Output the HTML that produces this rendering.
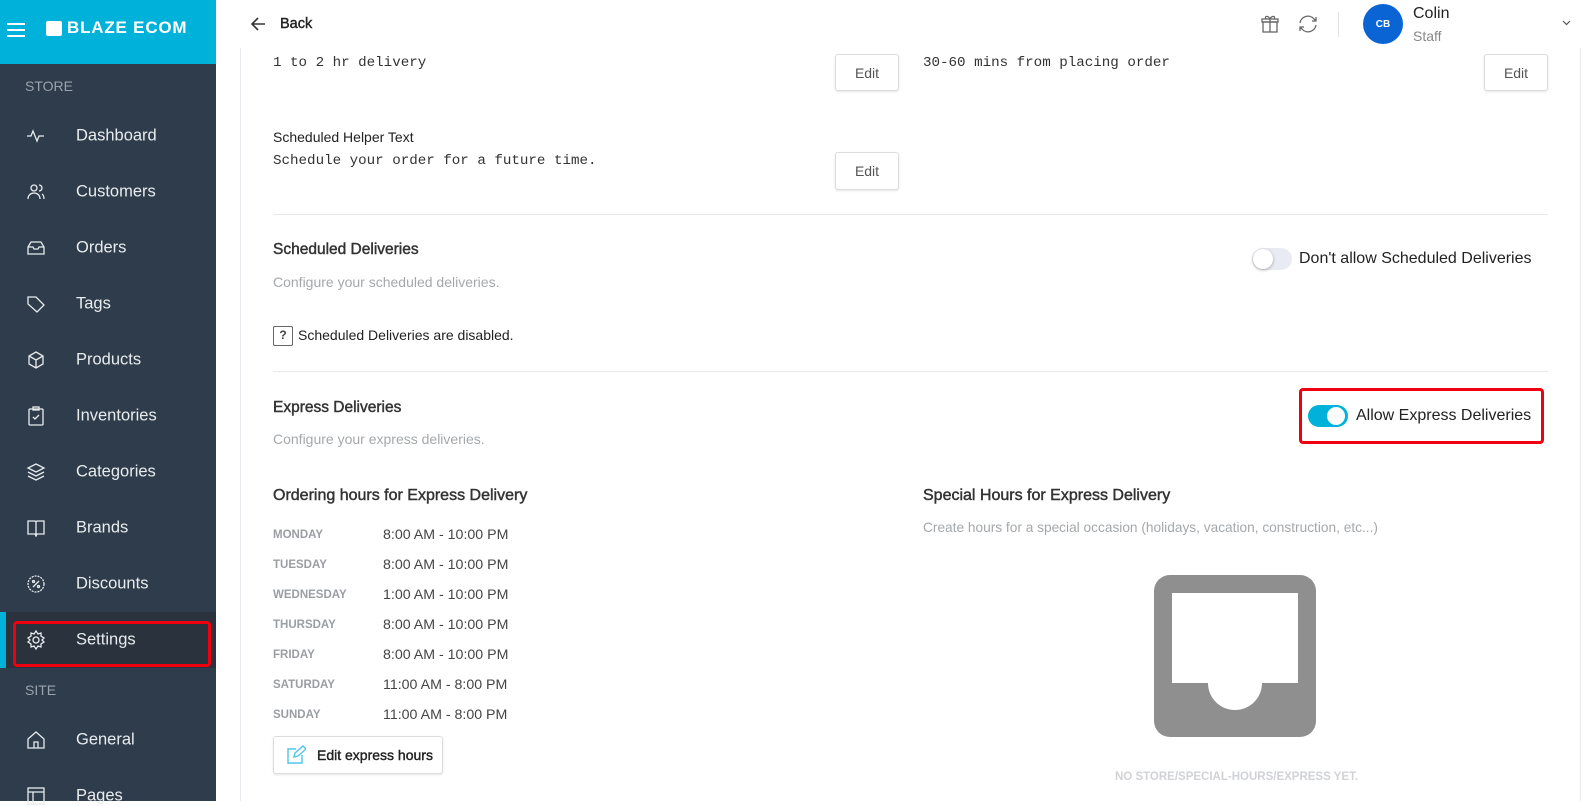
<!DOCTYPE html>
<html><head><meta charset="utf-8"><style>
*{margin:0;padding:0;box-sizing:border-box}
body{width:1591px;height:801px;overflow:hidden;background:#fff;font-family:"Liberation Sans",Arial,sans-serif;position:relative;color:#1f2a2a}
.a{position:absolute;white-space:nowrap}
#sb{position:absolute;left:0;top:0;width:216px;height:801px;background:#2f3c4b}
#top{position:absolute;left:0;top:0;width:216px;height:64px;background:#00b2d9}
.nav{position:absolute;left:76px;font-size:16.5px;color:#e8ecef;transform:translateY(-50%)}
.ic{position:absolute;left:26px;width:20px;height:20px;transform:translateY(-50%)}
.sec{position:absolute;left:25px;font-size:14px;color:#9aa3ad;transform:translateY(-50%)}
.mono{font-family:"Liberation Mono",monospace;font-size:14.2px;color:#333}
.btn{position:absolute;border:1px solid #dcdcdc;border-radius:3px;background:#fff;box-shadow:0 1px 2px rgba(0,0,0,.1);font-size:14px;color:#555;display:flex;align-items:center;justify-content:center;white-space:nowrap}
.h{font-size:15.5px;color:#333;font-weight:normal;-webkit-text-stroke:0.45px #333}
.g{font-size:14px;color:#a5a8ab}
.day{position:absolute;left:273px;font-size:11.5px;font-weight:bold;color:#9a9ea3;transform:translateY(-50%)}
.tm{position:absolute;left:383px;font-size:14.2px;color:#444;transform:translateY(-50%)}
.hr{position:absolute;left:273px;width:1275px;height:1px;background:#e6e8ec}
</style></head><body>
<div id="sb"></div>
<div id="top"></div>
<div class="a" style="left:7px;top:23px;width:18px;height:2px;background:#fff;box-shadow:0 6px 0 #fff,0 12px 0 #fff"></div>
<div class="a" style="left:46px;top:21px;width:16px;height:15px;background:#fff;border-radius:2px"></div>
<div class="a" style="left:67px;top:18px;font-size:17px;font-weight:bold;color:#fff;letter-spacing:.8px">BLAZE ECOM</div>
<div class="sec" style="top:86px">STORE</div>
<svg class="ic" style="top:136px" viewBox="0 0 20 20" fill="none" stroke="#e8ecef" stroke-width="1.3"><path d="M1 10h4l2-5 4 10 2-5h5"/></svg>
<div class="nav" style="top:136px">Dashboard</div>
<svg class="ic" style="top:192px" viewBox="0 0 20 20" fill="none" stroke="#e8ecef" stroke-width="1.3"><circle cx="8" cy="6" r="3"/><path d="M2 17c0-4 3-6 6-6s6 2 6 6M13 3a3 3 0 010 6M16 12c1.5 1 2 3 2 5"/></svg>
<div class="nav" style="top:192px">Customers</div>
<svg class="ic" style="top:248px" viewBox="0 0 20 20" fill="none" stroke="#e8ecef" stroke-width="1.3"><path d="M2 9l3-5h10l3 5v7H2z M2 9h5l1 2h4l1-2h5"/></svg>
<div class="nav" style="top:248px">Orders</div>
<svg class="ic" style="top:304px" viewBox="0 0 20 20" fill="none" stroke="#e8ecef" stroke-width="1.3"><path d="M2 3h8l8 8-7 7-9-8z"/></svg>
<div class="nav" style="top:304px">Tags</div>
<svg class="ic" style="top:360px" viewBox="0 0 20 20" fill="none" stroke="#e8ecef" stroke-width="1.3"><path d="M10 2l7 4v8l-7 4-7-4V6zM3 6l7 4 7-4M10 10v8"/></svg>
<div class="nav" style="top:360px">Products</div>
<svg class="ic" style="top:416px" viewBox="0 0 20 20" fill="none" stroke="#e8ecef" stroke-width="1.3"><rect x="3" y="3" width="14" height="16" rx="1"/><rect x="7" y="1" width="6" height="3"/><path d="M7 11l2 2 4-4"/></svg>
<div class="nav" style="top:416px">Inventories</div>
<svg class="ic" style="top:472px" viewBox="0 0 20 20" fill="none" stroke="#e8ecef" stroke-width="1.3"><path d="M10 2l8 4-8 4-8-4zM2 10l8 4 8-4M2 14l8 4 8-4"/></svg>
<div class="nav" style="top:472px">Categories</div>
<svg class="ic" style="top:528px" viewBox="0 0 20 20" fill="none" stroke="#e8ecef" stroke-width="1.3"><path d="M2 3h7l1 1 1-1h7v13h-7l-1 2-1-2H2zM10 4v14"/></svg>
<div class="nav" style="top:528px">Brands</div>
<svg class="ic" style="top:584px" viewBox="0 0 20 20" fill="none" stroke="#e8ecef" stroke-width="1.3"><circle cx="10" cy="10" r="8" stroke-dasharray="2 1"/><path d="M7 13l6-6"/><circle cx="7.5" cy="7.5" r="1"/><circle cx="12.5" cy="12.5" r="1"/></svg>
<div class="nav" style="top:584px">Discounts</div>
<div class="a" style="left:0;top:612px;width:216px;height:56px;background:#29323d"></div>
<div class="a" style="left:0;top:612px;width:6px;height:56px;background:#00b2d9"></div>
<div class="a" style="left:13px;top:621px;width:198px;height:46px;border:3px solid #f0000e;border-radius:4px"></div>
<svg class="ic" style="top:640px" viewBox="0 0 20 20" fill="none" stroke="#e8ecef" stroke-width="1.3"><circle cx="10" cy="10" r="3"/><path d="M10 1l2 3 3-1 0 3 3 2-2 2 2 2-3 2 0 3-3-1-2 3-2-3-3 1 0-3-3-2 2-2-2-2 3-2 0-3 3 1z"/></svg>
<div class="nav" style="top:640px">Settings</div>
<div class="sec" style="top:690px">SITE</div>
<svg class="ic" style="top:740px" viewBox="0 0 20 20" fill="none" stroke="#e8ecef" stroke-width="1.3"><path d="M2 9l8-7 8 7v9H2zM8 18v-6h4v6"/></svg>
<div class="nav" style="top:740px">General</div>
<svg class="ic" style="top:796px" viewBox="0 0 20 20" fill="none" stroke="#e8ecef" stroke-width="1.3"><rect x="2" y="2" width="16" height="16"/><path d="M2 6h16M7 6v12"/></svg>
<div class="nav" style="top:796px">Pages</div>

<!-- header -->
<svg class="a" style="left:250px;top:16px" width="16" height="16" viewBox="0 0 16 16" fill="none" stroke="#333" stroke-width="1.6"><path d="M15 8H2M8 2L2 8l6 6"/></svg>
<div class="a" style="left:280px;top:16px;font-size:14.5px;color:#222;-webkit-text-stroke:0.4px #222">Back</div>
<svg class="a" style="left:1260px;top:14px" width="20" height="20" viewBox="0 0 20 20" fill="none" stroke="#666" stroke-width="1.3"><rect x="3" y="8" width="14" height="10"/><rect x="2" y="5" width="16" height="3"/><path d="M10 5v13M10 5c-2-4-6-3-4 0M10 5c2-4 6-3 4 0"/></svg>
<svg class="a" style="left:1297px;top:13px" width="22" height="22" viewBox="0 0 22 22" fill="none" stroke="#666" stroke-width="1.3"><path d="M3 10a8 8 0 0114-4l2 2M19 4v4h-4M19 12a8 8 0 01-14 4l-2-2M3 18v-4h4"/></svg>
<div class="a" style="left:1338px;top:12px;width:1px;height:25px;background:#e2e2e2"></div>
<div class="a" style="left:1363px;top:4px;width:40px;height:40px;border-radius:50%;background:#0b64d4;color:#fff;font-size:10px;display:flex;align-items:center;justify-content:center;font-weight:bold">CB</div>
<div class="a" style="left:1413px;top:5px;font-size:16px;color:#222">Colin</div>
<div class="a" style="left:1413px;top:28px;font-size:14px;color:#888">Staff</div>
<svg class="a" style="left:1562px;top:20px" width="9" height="6" viewBox="0 0 9 6" fill="none" stroke="#555" stroke-width="1.2"><path d="M1 1l3.5 3.5L8 1"/></svg>

<!-- card -->
<div class="a" style="left:240px;top:48px;width:1px;height:753px;background:#e8eaf0"></div>
<div class="a" style="left:1580px;top:48px;width:1px;height:753px;background:#e8eaf0"></div>

<div class="a mono" style="left:273px;top:55px">1 to 2 hr delivery</div>
<div class="btn" style="left:835px;top:54px;width:64px;height:37px">Edit</div>
<div class="a mono" style="left:923px;top:55px">30-60 mins from placing order</div>
<div class="btn" style="left:1484px;top:54px;width:64px;height:37px">Edit</div>
<div class="a" style="left:273px;top:129px;font-size:14px;color:#222">Scheduled Helper Text</div>
<div class="a mono" style="left:273px;top:153px">Schedule your order for a future time.</div>
<div class="btn" style="left:835px;top:152px;width:64px;height:38px">Edit</div>
<div class="hr" style="top:214px"></div>
<div class="a h" style="left:273px;top:241px">Scheduled Deliveries</div>
<div class="a g" style="left:273px;top:274px">Configure your scheduled deliveries.</div>
<div class="a" style="left:1252px;top:248px;width:40px;height:22px;border-radius:11px;background:#e9ebf2"></div>
<div class="a" style="left:1253px;top:249px;width:20px;height:20px;border-radius:50%;background:#fff;box-shadow:0 1px 3px rgba(0,0,0,.3)"></div>
<div class="a" style="left:1299px;top:250px;font-size:16px;color:#222">Don't allow Scheduled Deliveries</div>
<div class="a" style="left:273px;top:326px;width:20px;height:20px;border:1.5px solid #666;border-radius:2px;font-size:12px;color:#444;text-align:center;line-height:17px;font-weight:bold">?</div>
<div class="a" style="left:298px;top:327px;font-size:14px;color:#222">Scheduled Deliveries are disabled.</div>
<div class="hr" style="top:371px"></div>
<div class="a h" style="left:273px;top:399px">Express Deliveries</div>
<div class="a g" style="left:273px;top:431px">Configure your express deliveries.</div>
<div class="a" style="left:1299px;top:388px;width:245px;height:56px;border:3px solid #f0000e;border-radius:4px"></div>
<div class="a" style="left:1308px;top:405px;width:40px;height:22px;border-radius:11px;background:#00b2d9"></div>
<div class="a" style="left:1327px;top:407px;width:18px;height:18px;border-radius:50%;background:#fff"></div>
<div class="a" style="left:1356px;top:407px;font-size:16px;color:#222">Allow Express Deliveries</div>

<div class="a h" style="left:273px;top:487px;font-size:16px">Ordering hours for Express Delivery</div>
<div class="a h" style="left:923px;top:487px;font-size:16px">Special Hours for Express Delivery</div>
<div class="a g" style="left:923px;top:520px;font-size:13.7px">Create hours for a special occasion (holidays, vacation, construction, etc...)</div>

<div class="day" style="top:535px">MONDAY</div><div class="tm" style="top:535px">8:00 AM - 10:00 PM</div>
<div class="day" style="top:565px">TUESDAY</div><div class="tm" style="top:565px">8:00 AM - 10:00 PM</div>
<div class="day" style="top:595px">WEDNESDAY</div><div class="tm" style="top:595px">1:00 AM - 10:00 PM</div>
<div class="day" style="top:625px">THURSDAY</div><div class="tm" style="top:625px">8:00 AM - 10:00 PM</div>
<div class="day" style="top:655px">FRIDAY</div><div class="tm" style="top:655px">8:00 AM - 10:00 PM</div>
<div class="day" style="top:685px">SATURDAY</div><div class="tm" style="top:685px">11:00 AM - 8:00 PM</div>
<div class="day" style="top:715px">SUNDAY</div><div class="tm" style="top:715px">11:00 AM - 8:00 PM</div>
<div class="btn" style="left:273px;top:736px;width:170px;height:38px;justify-content:flex-start;padding-left:12px;color:#222;-webkit-text-stroke:0.4px #222">
<svg width="20" height="20" viewBox="0 0 20 20" fill="none" stroke="#4ec6ea" stroke-width="1.4" style="margin-right:11px;-webkit-text-stroke:0"><path d="M10 4H2v14h14v-8M8 12l1-4 8-7 3 3-8 7z"/></svg>Edit express hours</div>

<svg class="a" style="left:1154px;top:575px" width="162" height="162" viewBox="0 0 162 162"><rect width="162" height="162" rx="16" fill="#8f8f8f"/><path d="M18 18h126v90H108a27 27 0 01-54 0H18z" fill="#fff"/></svg>
<div class="a" style="left:1115px;top:771px;font-size:11.5px;font-weight:bold;color:#d0d2d5">NO STORE/SPECIAL-HOURS/EXPRESS YET.</div>
</body></html>
